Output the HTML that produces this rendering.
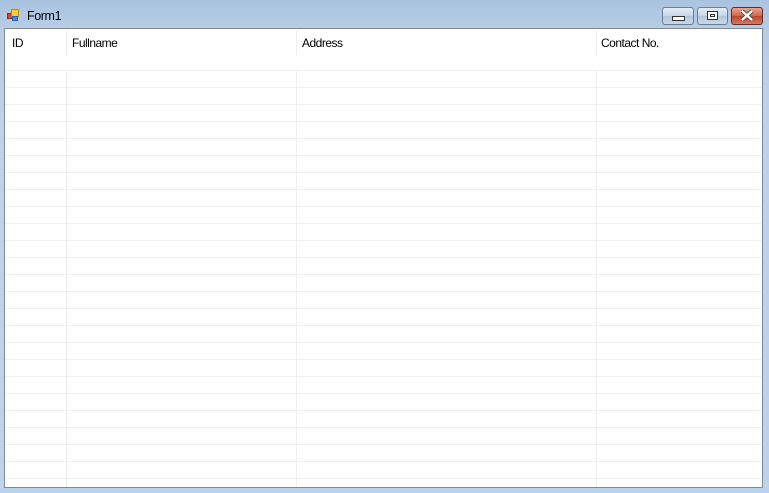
<!DOCTYPE html>
<html><head><style>
*{margin:0;padding:0;box-sizing:border-box}
body{width:769px;height:493px;overflow:hidden;background:linear-gradient(#a9c3e0 0px,#b7cde6 28px,#bcd3eb 120px,#bcd3eb);font-family:"Liberation Sans",sans-serif;position:relative}
.title{position:absolute;left:27px;top:9px;font-size:12.5px;letter-spacing:-0.4px;color:#000}
.btn{position:absolute;top:7px;height:18px;border:1px solid #6d7e93;border-radius:3px;background:linear-gradient(#e4ecf5,#c6d5e7 50%,#b3c6dc 51%,#c9d8e9)}
.client{position:absolute;left:4px;top:28px;width:759px;height:460px;border:1px solid #838a93;background:#fff;overflow:hidden}
.h{position:absolute;left:0;right:0;height:1px;background:#f0f0f0}
.v{position:absolute;width:1px;background:#f0f0f0}
.hd{position:absolute;top:7px;font-size:12px;letter-spacing:-0.5px;color:#000}
</style></head><body>
<svg style="position:absolute;left:7px;top:9px" width="13" height="13"><rect x="0.5" y="4.5" width="5" height="5" fill="#d42" stroke="#922"/><rect x="4.5" y="0.5" width="7" height="7" fill="#fc3" stroke="#b80"/><rect x="5.5" y="7.5" width="5" height="4" fill="#48d" stroke="#26a"/></svg>
<div class="title">Form1</div>
<div class="btn" style="left:662px;width:32px"><div style="position:absolute;left:9px;top:8px;width:13px;height:5px;border:1px solid #333;background:#fff"></div></div>
<div class="btn" style="left:697px;width:31px"><div style="position:absolute;left:9px;top:3px;width:11px;height:9px;border:1px solid #333;background:#fff"><div style="margin:2px;height:3px;border:1px solid #333"></div></div></div>
<div class="btn" style="left:731px;width:32px;border-color:#6b2a22;background:linear-gradient(#e8a493,#d2654f 50%,#c0432c 51%,#d47a5e)"><svg width="30" height="16" style="position:absolute;left:0;top:0"><path d="M10 3 L20 12 M20 3 L10 12" stroke="#444" stroke-width="4"/><path d="M10 3 L20 12 M20 3 L10 12" stroke="#fff" stroke-width="2.4"/></svg></div>
<div class="client">
<div class="hd" style="left:7px">ID</div>
<div class="hd" style="left:67px">Fullname</div>
<div class="hd" style="left:297px">Address</div>
<div class="hd" style="left:596px">Contact No.</div>
<div class="v" style="left:61px;top:1px;height:25px"></div>
<div class="v" style="left:291px;top:1px;height:25px"></div>
<div class="v" style="left:591px;top:1px;height:25px"></div>
<div class="v" style="left:61px;top:41px;bottom:0"></div>
<div class="v" style="left:291px;top:41px;bottom:0"></div>
<div class="v" style="left:591px;top:41px;bottom:0"></div>
<div class="h" style="top:41px"></div><div class="h" style="top:58px"></div><div class="h" style="top:75px"></div><div class="h" style="top:92px"></div><div class="h" style="top:109px"></div><div class="h" style="top:126px"></div><div class="h" style="top:143px"></div><div class="h" style="top:160px"></div><div class="h" style="top:177px"></div><div class="h" style="top:194px"></div><div class="h" style="top:211px"></div><div class="h" style="top:228px"></div><div class="h" style="top:245px"></div><div class="h" style="top:262px"></div><div class="h" style="top:279px"></div><div class="h" style="top:296px"></div><div class="h" style="top:313px"></div><div class="h" style="top:330px"></div><div class="h" style="top:347px"></div><div class="h" style="top:364px"></div><div class="h" style="top:381px"></div><div class="h" style="top:398px"></div><div class="h" style="top:415px"></div><div class="h" style="top:432px"></div><div class="h" style="top:449px"></div>
</div>
</body></html>
